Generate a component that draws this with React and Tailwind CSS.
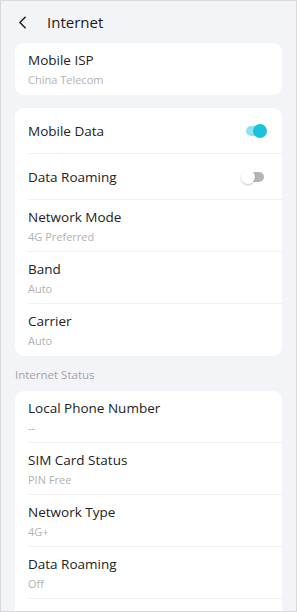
import { ChevronLeft } from 'lucide-react'

const FONT = { fontFamily: '"Open Sans", "Noto Sans", sans-serif' }

function Toggle({ on }) {
  return (
    <div className="relative w-[26px] h-[14px] flex items-center">
      <div className={`absolute left-[5px] right-[3px] h-[10px] rounded-full ${on ? 'bg-[#8fe3ee]' : 'bg-[#b4b4b4]'}`} />
      <div
        className={`absolute top-0 w-[14px] h-[14px] rounded-full ${
          on ? 'right-0 bg-[#1cc2d9]' : 'left-0 bg-white shadow-[0_1px_2px_rgba(0,0,0,0.25)]'
        }`}
      />
    </div>
  )
}

function Row({ title, sub, toggle, last }) {
  return (
    <div className={`ml-[13px] pr-[15px] flex items-center ${last ? '' : 'border-b border-[#f0f0f2]'} ${sub !== undefined ? 'h-[52px]' : 'h-[46px]'}`}>
      <div className="flex-1">
        <div className="text-[13.5px] leading-[18px] text-[#222]">{title}</div>
        {sub !== undefined && (
          <div className="mt-[3px] text-[11px] leading-[15px] text-[#b2b2b2]">{sub}</div>
        )}
      </div>
      {toggle !== undefined && <Toggle on={toggle} />}
    </div>
  )
}

export default function App() {
  return (
    <div style={FONT} className="w-[297px] h-[612px] overflow-hidden border border-[#d9d9db] bg-[#f3f4f8]">
      {/* Header */}
      <div className="h-[42px] flex items-center">
        <ChevronLeft className="ml-[11px] w-[21px] h-[21px] text-[#222]" strokeWidth={1.8} />
        <span className="ml-[14px] text-[15px] font-medium text-[#1a1a1a]">Internet</span>
      </div>

      <div className="px-[14px]">
        <div className="bg-white rounded-[9px]">
          <Row title="Mobile ISP" sub="China Telecom" last />
        </div>

        <div className="mt-[13px] bg-white rounded-[9px]">
          <Row title="Mobile Data" toggle={true} />
          <Row title="Data Roaming" toggle={false} />
          <Row title="Network Mode" sub="4G Preferred" />
          <Row title="Band" sub="Auto" />
          <Row title="Carrier" sub="Auto" last />
        </div>

        <div className="pt-[11px] pb-[8px] text-[11.5px] leading-[16px] text-[#a3a3a6]">Internet Status</div>

        <div className="bg-white rounded-[9px]">
          <Row title="Local Phone Number" sub="--" />
          <Row title="SIM Card Status" sub="PIN Free" />
          <Row title="Network Type" sub="4G+" />
          <Row title="Data Roaming" sub="Off" />
          <div className="h-[40px]" />
        </div>
      </div>
    </div>
  )
}
